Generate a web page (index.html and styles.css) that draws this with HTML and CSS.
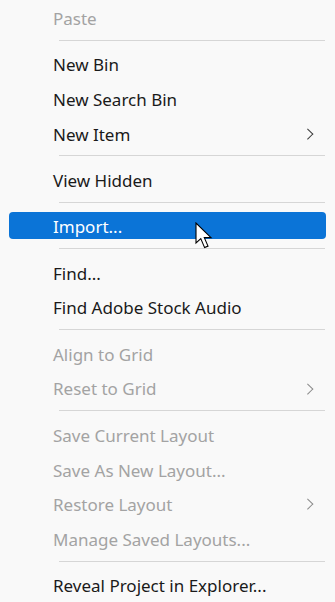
FILE: index.html
```html
<!DOCTYPE html>
<html lang="en">
<head>
    <meta charset="UTF-8">
    <meta name="viewport" content="width=device-width, initial-scale=1.0">
    <title>Project Context Menu</title>
    <link rel="stylesheet" href="styles.css">
</head>
<body>
    <div class="menu">
        <div class="item disabled"><span class="label">Paste</span></div>
        <div class="separator"></div>
        <div class="item"><span class="label">New Bin</span></div>
        <div class="item"><span class="label">New Search Bin</span></div>
        <div class="item has-sub"><span class="label">New Item</span><span class="chevron"></span></div>
        <div class="separator"></div>
        <div class="item"><span class="label">View Hidden</span></div>
        <div class="separator"></div>
        <div class="item active">
            <span class="label">Import...</span>
            <svg class="cursor" width="20" height="29" viewBox="0 0 20 29">
                <path d="M1 1 L1 21 L5.8 16.6 L9.6 25.6 L13 24.1 L9.3 15.6 L16 15.6 Z" fill="#fff" stroke="#000" stroke-width="1.1" stroke-linejoin="miter"/>
            </svg>
        </div>
        <div class="separator"></div>
        <div class="item"><span class="label">Find...</span></div>
        <div class="item"><span class="label">Find Adobe Stock Audio</span></div>
        <div class="separator"></div>
        <div class="item disabled"><span class="label">Align to Grid</span></div>
        <div class="item disabled has-sub"><span class="label">Reset to Grid</span><span class="chevron"></span></div>
        <div class="separator"></div>
        <div class="item disabled"><span class="label">Save Current Layout</span></div>
        <div class="item disabled"><span class="label">Save As New Layout...</span></div>
        <div class="item disabled has-sub"><span class="label">Restore Layout</span><span class="chevron"></span></div>
        <div class="item disabled"><span class="label">Manage Saved Layouts...</span></div>
        <div class="separator"></div>
        <div class="item"><span class="label">Reveal Project in Explorer...</span></div>
    </div>
</body>
</html>
```

FILE: styles.css
```css
:root {
    --menu-bg: #f9f9f9;
    --text-color: #1a1a1a;
    --disabled-color: #a3a3a3;
    --highlight: #0b74d7;
    --separator: #d6d6d6;
}

body {
    margin: 0;
    padding: 0;
    background-color: var(--menu-bg);
    font-family: 'Noto Sans', 'Open Sans', sans-serif;
    overflow: hidden;
}

.menu {
    width: 335px;
    height: 602px;
    margin-top: -0.5px;
    background-color: var(--menu-bg);
}

.item {
    position: relative;
    height: 34.7px;
    display: flex;
    align-items: center;
    padding: 0 20px 0 53px;
    font-size: 17px;
    color: var(--text-color);
}

.item.disabled {
    color: var(--disabled-color);
}

.item.active {
    color: #fff;
}

.item.active::before {
    content: '';
    position: absolute;
    left: 9px;
    right: 9px;
    top: 4px;
    bottom: 4px;
    border-radius: 4px;
    background-color: var(--highlight);
}

.label {
    position: relative;
    top: 1.5px;
    flex: 1;
    white-space: nowrap;
}

.chevron {
    width: 6.5px;
    height: 6.5px;
    border-right: 1.2px solid #3a3a3a;
    border-top: 1.2px solid #3a3a3a;
    transform: rotate(45deg);
    margin-right: 4px;
    position: relative;
    top: 1px;
}

.item.disabled .chevron {
    border-color: #8a8a8a;
}

.separator {
    height: 1px;
    margin: 5.4px 10px 5.3px 59px;
    background-color: var(--separator);
}

.cursor {
    position: absolute;
    left: 195px;
    top: 14px;
}
```
